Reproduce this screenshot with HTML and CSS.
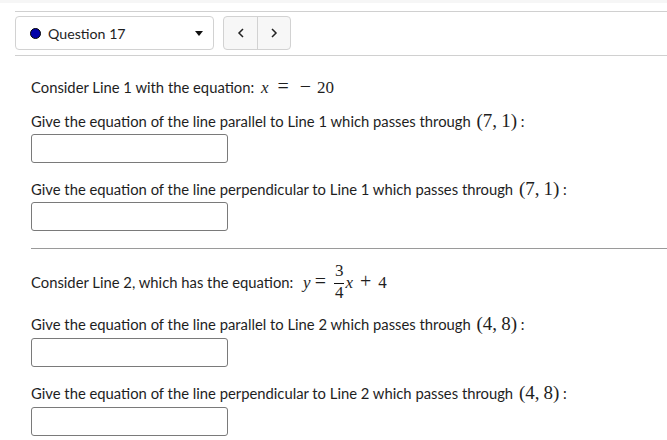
FILE: index.html
```html
<!DOCTYPE html>
<html>
<head>
<meta charset="utf-8">
<link rel="stylesheet" href="styles.css">
</head>
<body>
<div class="topstrip"></div>
<div class="navbar">
  <div class="qselect">
    <span class="dot"></span>
    <span class="qlabel">Question 17</span>
    <span class="caret"></span>
  </div>
  <div class="pager">
    <button class="pbtn" aria-label="Previous"><svg width="8" height="10" viewBox="0 0 8 10"><polyline points="6,1 2,5 6,9" fill="none" stroke="#222" stroke-width="1.5"/></svg></button>
    <button class="pbtn" aria-label="Next"><svg width="8" height="10" viewBox="0 0 8 10"><polyline points="2,1 6,5 2,9" fill="none" stroke="#222" stroke-width="1.5"/></svg></button>
  </div>
</div>
<div class="content">
  <p class="line1">Consider Line 1 with the equation: <span class="math m1"><i>x</i><span class="rel">=</span><span class="bin">&minus;</span>20</span></p>
  <p class="q q1">Give the equation of the line parallel to Line 1 which passes through <span class="math pt">(7,<span class="thin"></span>1)</span> :</p>
  <div class="answer"></div>
  <p class="q q2">Give the equation of the line perpendicular to Line 1 which passes through <span class="math pt">(7,<span class="thin"></span>1)</span> :</p>
  <div class="answer"></div>
  <div class="rule"></div>
  <p class="line2">Consider Line 2, which has the equation: <span class="math m2"><i>y</i><span class="rel">=</span><span class="frac"><span class="num">3</span><span class="den">4</span></span><i>x</i><span class="bin">+</span>4</span></p>
  <p class="q q3">Give the equation of the line parallel to Line 2 which passes through <span class="math pt">(4,<span class="thin"></span>8)</span> :</p>
  <div class="answer"></div>
  <p class="q q4">Give the equation of the line perpendicular to Line 2 which passes through <span class="math pt">(4,<span class="thin"></span>8)</span> :</p>
  <div class="answer"></div>
</div>
</body>
</html>
```

FILE: styles.css
```css
html, body {
  margin: 0;
  padding: 0;
  background: #fff;
}
body {
  font-family: Lato, "Open Sans", sans-serif;
  font-size: 14.8px;
  color: #1e1e1e;
}
.topstrip {
  height: 3px;
  background: #f6f6f6;
}
.navbar {
  margin: 8px 0 0 15px;
  border-top: 1px solid #d0d0d0;
  border-bottom: 1px solid #d0d0d0;
  padding: 4px 0 5px 0;
  display: flex;
  align-items: center;
  gap: 9px;
}
.qselect {
  width: 197px;
  height: 32px;
  border: 1px solid #d2d2d2;
  border-radius: 4px;
  display: flex;
  align-items: center;
}
.dot {
  width: 9px;
  height: 9px;
  border-radius: 50%;
  background: #0000a8;
  border: 1px solid #000;
  margin-left: 14px;
}
.qlabel {
  margin-left: 7px;
  font-size: 14.2px;
  flex: 1;
}
.caret {
  width: 0;
  height: 0;
  border-left: 4px solid transparent;
  border-right: 4px solid transparent;
  border-top: 5px solid #111;
  margin-right: 10px;
}
.pager {
  display: flex;
  border: 1px solid #d2d2d2;
  border-radius: 4px;
  background: #f7f7f7;
  height: 32px;
}
.pbtn {
  width: 33px;
  height: 32px;
  border: 0;
  background: transparent;
  padding: 0;
  display: flex;
  align-items: center;
  justify-content: center;
}
.pbtn + .pbtn {
  border-left: 1px solid #d2d2d2;
}
.content {
  padding-left: 31px;
}
p {
  margin: 0;
  line-height: 20px;
  white-space: nowrap;
}
.math {
  font-family: "Liberation Serif", "DejaVu Serif", serif;
  line-height: 0;
}
.math i {
  font-family: "Liberation Serif", "DejaVu Serif", serif;
  font-style: italic;
}
.rel, .bin {
  font-size: 20px;
}
.m1 {
  font-size: 17px;
  margin-left: 3px;
}
.m1 .rel {
  margin: 0 11px 0 9px;
}
.m1 .bin {
  margin: 0 6px 0 0;
}
.m2 {
  font-size: 17px;
  margin-left: 6px;
}
.m2 .rel {
  margin: 0 8px 0 4px;
}
.m2 .bin {
  margin: 0 7px 0 7px;
}
.frac {
  display: inline-block;
  vertical-align: -9.6px;
  text-align: center;
  margin-right: 1px;
}
.num {
  display: block;
  line-height: 14px;
  padding: 0 1px 5px;
  border-bottom: 1px solid #111;
}
.den {
  display: block;
  line-height: 14px;
  padding: 2px 1px 0;
}
.pt {
  font-size: 19px;
  margin-left: 2px;
}
.thin {
  display: inline-block;
  width: 4px;
}
.line1 {
  margin-top: 21px;
}
.q1 {
  margin-top: 14px;
}
.q2 {
  margin-top: 16px;
}
.answer {
  margin-top: 3px;
  width: 197px;
  height: 29px;
  box-sizing: border-box;
  border: 1px solid #7a7a7a;
  border-radius: 3px;
}
.rule {
  margin-top: 17px;
  height: 1px;
  background: #9a9a9a;
}
.line2 {
  margin-top: 15px;
}
.q3 {
  margin-top: 14px;
}
.q4 {
  margin-top: 16px;
}
.q3 + .answer, .q4 + .answer {
  margin-top: 4px;
}
```
